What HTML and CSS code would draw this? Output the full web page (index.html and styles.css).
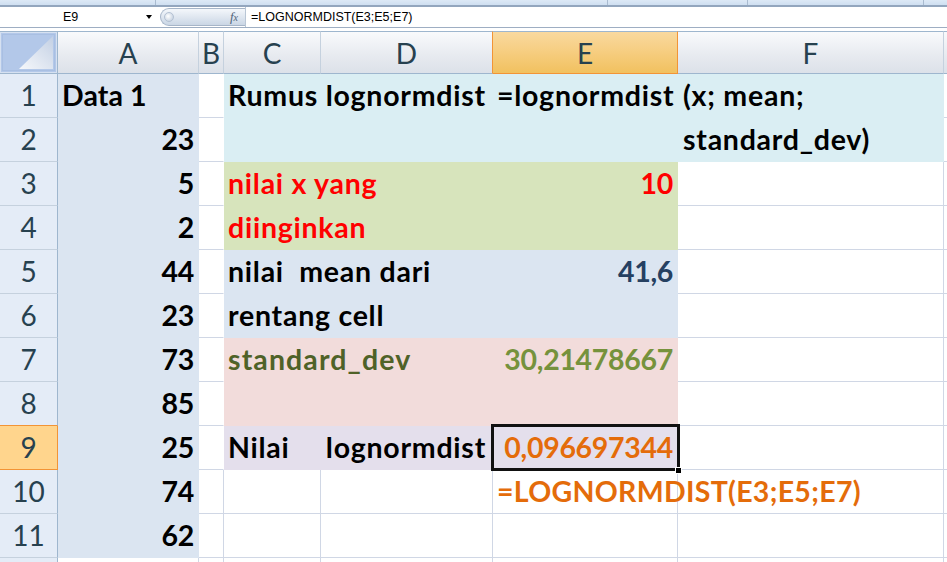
FILE: index.html
```html
<!DOCTYPE html>
<html>
<head>
<meta charset="utf-8">
<link rel="stylesheet" href="styles.css">
</head>
<body>
<div class="top">
  <div class="ribbon">
    <div class="rseg w1"></div><div class="rseg w2"></div><div class="rseg w3"></div><div class="rseg w4"></div><div class="rseg w5"></div>
  </div>
  <div class="fbar">
    <div class="namebox"><span>E9</span><span class="arrow"></span></div>
    <div class="pill"><span class="knob"></span><span class="fx">f<span class="fxx">x</span></span></div>
    <div class="formula">=LOGNORMDIST(E3;E5;E7)</div>
  </div>
  <div class="gap"></div>
</div>
<div class="sheet">
  <div class="ch corner"><svg width="57" height="41" viewBox="0 0 57 41"><defs><linearGradient id="tg" x1="1" y1="0" x2="0" y2="1"><stop offset="0" stop-color="#c3d0e4"/><stop offset="1" stop-color="#f6f8fb"/></linearGradient></defs><rect x="0.5" y="0.5" width="56" height="40" fill="#b3c8e9" stroke="#d6e1f1"/><rect x="2.5" y="2.5" width="52" height="36" fill="none" stroke="#a9bfe2"/><polygon points="53,4 53,37 19,37" fill="url(#tg)"/></svg></div>
  <div class="ch">A</div>
  <div class="ch">B</div>
  <div class="ch">C</div>
  <div class="ch pre">D</div>
  <div class="ch sel">E</div>
  <div class="ch">F</div>
  <div class="ch stub"></div>

  <div class="rh">1</div>
  <div class="c fa tight">Data 1</div>
  <div class="c nr"></div>
  <div class="c f1 over">Rumus lognormdist</div>
  <div class="c f1"></div>
  <div class="c f1">=lognormdist</div>
  <div class="c f1 fl">(x; mean;</div>
  <div class="c stub"></div>

  <div class="rh">2</div>
  <div class="c fa r num">23</div>
  <div class="c nr"></div>
  <div class="c f1"></div>
  <div class="c f1"></div>
  <div class="c f1"></div>
  <div class="c f1 fl">standard_dev)</div>
  <div class="c stub"></div>

  <div class="rh">3</div>
  <div class="c fa r num">5</div>
  <div class="c nr"></div>
  <div class="c f3 over red">nilai x yang</div>
  <div class="c f3"></div>
  <div class="c f3 r num red">10</div>
  <div class="c"></div>
  <div class="c stub"></div>

  <div class="rh">4</div>
  <div class="c fa r num">2</div>
  <div class="c nr"></div>
  <div class="c f3 over red">diinginkan</div>
  <div class="c f3"></div>
  <div class="c f3"></div>
  <div class="c"></div>
  <div class="c stub"></div>

  <div class="rh">5</div>
  <div class="c fa r num">44</div>
  <div class="c nr"></div>
  <div class="c f5 over">nilai&nbsp; mean dari</div>
  <div class="c f5"></div>
  <div class="c f5 r num blue">41,6</div>
  <div class="c"></div>
  <div class="c stub"></div>

  <div class="rh">6</div>
  <div class="c fa r num">23</div>
  <div class="c nr"></div>
  <div class="c f5 over">rentang cell</div>
  <div class="c f5"></div>
  <div class="c f5"></div>
  <div class="c"></div>
  <div class="c stub"></div>

  <div class="rh">7</div>
  <div class="c fa r num">73</div>
  <div class="c nr"></div>
  <div class="c f7 over olive wide">standard_dev</div>
  <div class="c f7"></div>
  <div class="c f7 r num olive2">30,21478667</div>
  <div class="c"></div>
  <div class="c stub"></div>

  <div class="rh pre">8</div>
  <div class="c fa r num">85</div>
  <div class="c nr"></div>
  <div class="c f7"></div>
  <div class="c f7"></div>
  <div class="c f7"></div>
  <div class="c"></div>
  <div class="c stub"></div>

  <div class="rh sel">9</div>
  <div class="c fa r num">25</div>
  <div class="c nr"></div>
  <div class="c f9">Nilai</div>
  <div class="c f9 r d9">lognormdist</div>
  <div class="c f9 r num orange active">0,096697344<span class="handle"></span></div>
  <div class="c"></div>
  <div class="c stub"></div>

  <div class="rh">10</div>
  <div class="c fa r num">74</div>
  <div class="c"></div>
  <div class="c"></div>
  <div class="c"></div>
  <div class="c over orange caps">=LOGNORMDIST(E3;E5;E7)</div>
  <div class="c"></div>
  <div class="c stub"></div>

  <div class="rh">11</div>
  <div class="c fa r num">62</div>
  <div class="c"></div>
  <div class="c"></div>
  <div class="c"></div>
  <div class="c"></div>
  <div class="c"></div>
  <div class="c stub"></div>

  <div class="rh"></div>
  <div class="c"></div>
  <div class="c"></div>
  <div class="c"></div>
  <div class="c"></div>
  <div class="c"></div>
  <div class="c"></div>
  <div class="c stub"></div>
</div>
</body>
</html>
```
FILE: styles.css
```css
* { box-sizing: border-box; }
html, body {
  margin: 0;
  padding: 0;
  width: 947px;
  height: 562px;
  overflow: hidden;
  background: #fff;
}
body { font-family: Lato, "Open Sans", sans-serif; }

.ribbon {
  display: flex;
  height: 7px;
  background: linear-gradient(#dde9f6, #cfdff1);
  border-bottom: 2px solid #93a6be;
}
.rseg { height: 100%; border-right: 1px solid #a9bbd0; }
.w1 { width: 156px; }
.w2 { width: 452px; }
.w3 { width: 140px; }
.w4 { width: 176px; }
.w5 { flex: 1; border-right: none; }

.fbar {
  display: flex;
  height: 21px;
  background: #fff;
  border-bottom: 1px solid #9eaec3;
}
.namebox {
  width: 155px;
  display: flex;
  align-items: center;
  padding-left: 63px;
  font: 12.5px "Liberation Sans", Arial, sans-serif;
  color: #000;
}
.arrow {
  margin-left: auto;
  margin-right: 3px;
  width: 0;
  height: 0;
  border-left: 3.5px solid transparent;
  border-right: 3.5px solid transparent;
  border-top: 4px solid #000;
}
.pill {
  margin-left: 5px;
  width: 85px;
  height: 18px;
  align-self: center;
  border: 1px solid #a6b5c8;
  border-right: none;
  border-radius: 9px 0 0 9px;
  background: linear-gradient(#f4f7fb, #dde5ef 55%, #cad6e5);
  display: flex;
  align-items: center;
  justify-content: space-between;
  padding: 0 7px 0 3px;
}
.knob {
  width: 10px;
  height: 10px;
  border-radius: 50%;
  border: 1px solid #b3c1d3;
  background: radial-gradient(circle at 40% 40%, #ffffff, #b9c7d9);
}
.fx {
  font: italic 13px "Liberation Serif", serif;
  color: #4f6378;
  line-height: 16px;
}
.fxx { font-size: 10px; }
.formula {
  padding-left: 5px;
  border-left: 1px solid #b9c6d5;
  font: 12.5px "Liberation Sans", Arial, sans-serif;
  line-height: 20px;
  color: #000;
}
.gap { height: 3px; background: #fff; }

.sheet {
  display: grid;
  grid-template-columns: 58px 141px 25px 97px 172px 185px 266px 3px;
  grid-template-rows: 43px;
  grid-auto-rows: 44px;
}

.ch {
  border-top: 1px solid #9eb6ce;
  border-bottom: 1px solid #9eb6ce;
  border-right: 1px solid #c5d1de;
  background: linear-gradient(#f9fafc, #e8ebf0 55%, #dce1e9);
  text-align: center;
  font-size: 28px;
  line-height: 42px;
  color: #27414f;
}
.ch.corner { padding: 0; line-height: 0; border-right-color: #9eb6ce; }
.ch.pre { border-right-color: #f29436; }
.ch.sel {
  background: linear-gradient(#f9d99f, #f6cd7f 50%, #f1c15f);
  border-right-color: #f29436;
  border-bottom-color: #f29436;
}
.ch.stub { border-right: none; }

.rh {
  background: #e4ecf7;
  border-right: 1px solid #9eb6ce;
  border-bottom: 1px solid #c5d1de;
  text-align: center;
  font-size: 28px;
  line-height: 42px;
  color: #27414f;
}
.rh.pre { border-bottom-color: #f29436; }
.rh.sel {
  background: #ffd58d;
  border-right-color: #f29436;
  border-bottom-color: #f29436;
}

.c {
  border-right: 1px solid #d0d7e5;
  border-bottom: 1px solid #d0d7e5;
  background: #fff;
  font-size: 28.5px;
  font-weight: bold;
  line-height: 42px;
  letter-spacing: 0.75px;
  white-space: nowrap;
  padding: 0 4px;
  color: #000;
}
.c.r { text-align: right; }
.c.num { letter-spacing: -0.3px; }
.c.tight { letter-spacing: 0.1px; }
.c.wide { letter-spacing: 1.1px; }
.c.caps { letter-spacing: 0.3px; }
.c.fl { padding-left: 5px; }
.c.stub { border-right: none; padding: 0; }
.c.nr { border-right-color: #fff; }
.c.over { z-index: 1; }
.c.d9 { padding-right: 6px; }

.fa { background: #dbe5f1; border-color: #dbe5f1; }
.f1 { background: #daeef3; border-color: #daeef3; }
.f3 { background: #d7e4bc; border-color: #d7e4bc; }
.f5 { background: #dbe5f1; border-color: #dbe5f1; }
.f7 { background: #f2dcdb; border-color: #f2dcdb; }
.f9 { background: #e4dfec; border-color: #e4dfec; }

.red { color: #ff0000; }
.blue { color: #254061; }
.olive { color: #4f6228; }
.olive2 { color: #76923c; }
.orange { color: #e46c0a; }

.active {
  position: relative;
  z-index: 2;
}
.active::after {
  content: "";
  position: absolute;
  left: -2px;
  top: -2px;
  right: -3px;
  bottom: -2px;
  border: 3px solid #111;
}
.handle {
  position: absolute;
  right: -5px;
  bottom: -5px;
  width: 7px;
  height: 7px;
  background: #000;
  border: 1px solid #fff;
  z-index: 3;
}
```
